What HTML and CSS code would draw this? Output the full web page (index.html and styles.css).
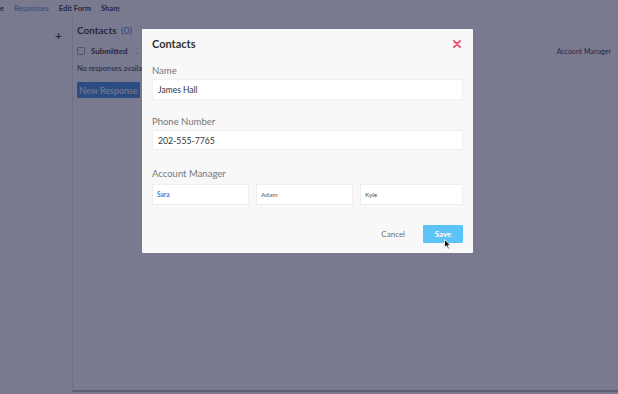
FILE: index.html
```html
<!DOCTYPE html>
<html>
<head>
<meta charset="utf-8">
<link rel="stylesheet" href="styles.css">
</head>
<body>
<div class="app">
  <nav class="topnav">
    <span class="nav-item">e</span>
    <span class="nav-item active">Responses</span>
    <span class="nav-item">Edit Form</span>
    <span class="nav-item">Share</span>
  </nav>
  <div class="main">
    <aside class="sidebar"><span class="plus">+</span></aside>
    <section class="panel">
      <div class="panel-title">Contacts <span class="count">(0)</span></div>
      <div class="table-head">
        <div class="th-left"><span class="checkbox"></span><span class="th-label">Submitted</span><span class="sort">&#8964;</span></div>
        <span class="th-right">Account Manager</span>
      </div>
      <div class="empty">No responses available</div>
      <button class="btn-new">New Response</button>
    </section>
  </div>
</div>

<div class="overlay"></div>

<div class="modal">
  <div class="modal-head">
    <span class="modal-title">Contacts</span>
    <svg class="close" width="8" height="8" viewBox="0 0 8 8"><path d="M1 1L7 7M7 1L1 7" stroke="#ea5a78" stroke-width="2" stroke-linecap="round"/></svg>
  </div>
  <div class="field">
    <div class="label">Name</div>
    <div class="input">James Hall</div>
  </div>
  <div class="field f2">
    <div class="label">Phone Number</div>
    <div class="input phone">202-555-7765</div>
  </div>
  <div class="field f3">
    <div class="label">Account Manager</div>
    <div class="options">
      <div class="option selected">Sara</div>
      <div class="option">Adam</div>
      <div class="option">Kyle</div>
    </div>
  </div>
  <div class="modal-foot">
    <span class="cancel">Cancel</span>
    <button class="save">Save</button>
  </div>
  <svg class="cursor" width="8" height="11" viewBox="0 0 8 11"><path d="M0.5 0.5L0.5 8.5L2.5 6.8L4 10L5.3 9.4L3.9 6.3L6.6 6.3Z" fill="#111" stroke="#fff" stroke-width="0.8"/></svg>
</div>
</body>
</html>
```

FILE: styles.css
```css
* { box-sizing: border-box; }
html, body { margin: 0; padding: 0; }
body {
  width: 618px;
  height: 394px;
  overflow: hidden;
  background: #ffffff;
  font-family: Lato, "Open Sans", Arial, sans-serif;
  color: #333;
  position: relative;
}
.app {
  display: flex;
  flex-direction: column;
  height: 394px;
}
.topnav {
  display: flex;
  gap: 10px;
  height: 17px;
  align-items: center;
  font-size: 7.5px;
  font-weight: 700;
  color: #333;
  flex-shrink: 0;
}
.nav-item.active { color: #3d8fd6; font-weight: 400; }
.main {
  display: flex;
  flex: 1;
  padding-bottom: 2px;
}
.sidebar {
  width: 72px;
  display: flex;
  justify-content: flex-end;
  padding: 13px 10px 0 0;
}
.plus { font-size: 12px; font-weight: 700; line-height: 12px; height: 12px; }
.panel {
  flex: 1;
  border-left: 1px solid #e6e6e6;
  border-bottom: 2px solid #b9b9c4;
  padding: 7px 0 0 4px;
}
.panel-title {
  font-size: 10px;
  font-weight: 700;
  line-height: 13px;
  color: #333;
}
.count { color: #3d8fd6; font-weight: 400; margin-left: 2px; }
.table-head {
  display: flex;
  justify-content: space-between;
  align-items: center;
  margin-top: 8px;
  height: 12px;
  padding-right: 7px;
}
.th-left { display: flex; align-items: center; gap: 6px; }
.checkbox {
  width: 8px; height: 8px;
  border: 1px solid #aaa;
  background: #fff;
  border-radius: 1px;
}
.th-label { font-size: 8px; font-weight: 700; }
.sort { font-size: 6px; color: #999; }
.th-right { font-size: 7px; color: #333; }
.empty {
  font-size: 7.5px;
  margin-top: 7px;
  line-height: 10px;
}
.btn-new {
  display: block;
  margin-top: 8px;
  width: 63px;
  height: 16px;
  border: 0;
  padding: 0;
  background: #3b8fd9;
  color: #fff;
  font-family: Lato, Arial, sans-serif;
  font-size: 9px;
  border-radius: 1px;
}
.overlay {
  position: absolute;
  inset: 0;
  background: rgba(32, 32, 68, 0.6);
}
.modal {
  position: absolute;
  left: 142px;
  top: 29px;
  width: 331px;
  height: 224px;
  background: #f8f8f9;
  border-radius: 1px;
  padding: 8px 10px 10px 10px;
  display: flex;
  flex-direction: column;
}
.modal-head {
  display: flex;
  justify-content: space-between;
  align-items: center;
  height: 13px;
  padding-right: 2px;
}
.modal-title { font-size: 11px; font-weight: 700; color: #333; }
.close { display: block; }
.field { margin-top: 15px; }
.field.f2 { margin-top: 16px; }
.field.f3 { margin-top: 18px; }
.label {
  font-size: 9.5px;
  line-height: 12px;
  color: #777;
  margin-bottom: 2px;
}
.input {
  height: 21px;
  background: #fff;
  border: 1px solid #f0f0f0;
  font-size: 8.5px;
  color: #333;
  display: flex;
  align-items: center;
  padding-left: 5px;
}
.input.phone { height: 20px; font-size: 8.7px; letter-spacing: 0; }
.f3 .label { margin-bottom: 4px; }
.options {
  display: grid;
  grid-template-columns: 97px 97px 1fr;
  gap: 7px;
}
.option {
  height: 21px;
  background: #fff;
  border: 1px solid #eeeeee;
  font-size: 6.5px;
  color: #555;
  display: flex;
  align-items: center;
  padding-left: 4px;
}
.option.selected { color: #3a7fd6; font-weight: 700; }
.modal-foot {
  margin-top: 20px;
  display: flex;
  justify-content: flex-end;
  align-items: center;
  gap: 18px;
}
.cancel { font-size: 8px; color: #707070; }
.save {
  width: 40px;
  height: 18px;
  border: 0;
  padding: 0;
  background: #5cc3f6;
  color: #fff;
  font-family: Lato, Arial, sans-serif;
  font-size: 8px;
  font-weight: 700;
  border-radius: 1px;
}
.cursor {
  position: absolute;
  left: 302px;
  top: 210px;
}
```
